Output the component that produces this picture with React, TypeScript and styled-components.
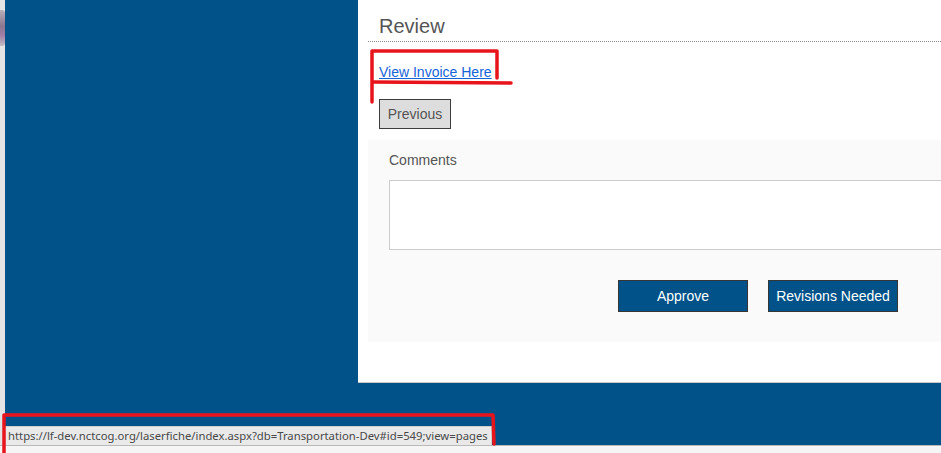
import React from 'react'
import styled, { createGlobalStyle } from 'styled-components'

const GlobalStyle = createGlobalStyle`
  html, body {
    margin: 0;
    padding: 0;
    overflow: hidden;
    background: #f3f3f3;
  }
  body {
    font-family: "Liberation Sans", Arial, sans-serif;
  }
`

const BRAND = '#005288'
const INK = '#e8141c'

const Screen = styled.div`
  position: relative;
  width: 941px;
  height: 453px;
  display: flex;
  flex-direction: column;
  overflow: hidden;
`

const Desktop = styled.div`
  display: flex;
  flex: 1;
  min-height: 0;
`

const Edge = styled.div`
  width: 5px;
  background: #e4e4e4;
  padding-top: 10px;
  box-sizing: border-box;
`

const AvatarSliver = styled.div`
  width: 5px;
  height: 36px;
  border-radius: 0 3px 3px 0;
  background: linear-gradient(180deg, #b7b0b8 0%, #8a7690 45%, #a07ea6 70%, #c4bcc4 100%);
`

const Canvas = styled.div`
  flex: 1;
  display: flex;
  align-items: flex-start;
  padding-left: 353px;
  background: ${BRAND};
`

const Panel = styled.section`
  flex: 1;
  height: 383px;
  box-sizing: border-box;
  background: #ffffff;
  border-bottom: 1px solid #c9c9c9;
  padding-left: 10px;
  overflow: hidden;
`

const Header = styled.div`
  padding: 14px 0 3px 11px;
  border-bottom: 1px dotted #8a8a8a;
  margin-right: -40px;
`

const Title = styled.h2`
  margin: 0;
  font-size: 20px;
  line-height: 24px;
  font-weight: 400;
  color: #555555;
`

const Body = styled.div`
  padding-left: 11px;
`

const InvoiceLink = styled.a`
  display: inline-block;
  margin-top: 21px;
  font-size: 14px;
  line-height: 18px;
  color: #1565d8;
  text-decoration: underline;
`

const PrevButton = styled.button`
  display: block;
  margin-top: 18px;
  width: 72px;
  height: 30px;
  padding: 0;
  background: #dddddd;
  border: 1px solid #3c3c3c;
  font-family: inherit;
  font-size: 14px;
  color: #555555;
`

const CommentsBox = styled.div`
  margin-top: 11px;
  padding: 11px 0 30px 21px;
  background: #fafafa;
  width: 620px;
`

const Label = styled.label`
  display: block;
  font-size: 14px;
  line-height: 18px;
  color: #555555;
`

const CommentField = styled.textarea`
  display: block;
  margin-top: 11px;
  width: 600px;
  height: 70px;
  box-sizing: border-box;
  border: 1px solid #cccccc;
  background: #ffffff;
  resize: none;
  outline: none;
`

const Actions = styled.div`
  display: flex;
  gap: 20px;
  margin-top: 30px;
  padding-left: 229px;
`

const ActionButton = styled.button`
  width: 130px;
  height: 32px;
  padding: 0;
  background: ${BRAND};
  border: 1px solid #363636;
  color: #ffffff;
  font-family: inherit;
  font-size: 14px;
`

const BottomBar = styled.div`
  height: 7px;
  background: #f5f5f5;
  border-top: 1px solid #b9b9b9;
`

const StatusTip = styled.div`
  position: absolute;
  left: 5px;
  top: 426px;
  height: 19px;
  padding: 0 3px 0 3px;
  box-sizing: border-box;
  background: #e9e9e9;
  border: 1px solid #cfcfcf;
  border-left: none;
  border-bottom: none;
  font-family: "Noto Sans", "Open Sans", sans-serif;
  font-size: 11.3px;
  line-height: 18px;
  color: #4a4a4a;
  white-space: nowrap;
`

const Markup = styled.svg`
  position: absolute;
  inset: 0;
  pointer-events: none;
`

const Stroke = styled.path`
  fill: none;
  stroke: ${INK};
  stroke-width: 3.5;
  stroke-linecap: round;
  stroke-linejoin: round;
`

export default function App() {
  return (
    <>
      <GlobalStyle />
      <Screen>
        <Desktop>
          <Edge>
            <AvatarSliver />
          </Edge>
          <Canvas>
            <Panel>
              <Header>
                <Title>Review</Title>
              </Header>
              <Body>
                <InvoiceLink href="#">View Invoice Here</InvoiceLink>
                <PrevButton>Previous</PrevButton>
              </Body>
              <CommentsBox>
                <Label>Comments</Label>
                <CommentField />
                <Actions>
                  <ActionButton>Approve</ActionButton>
                  <ActionButton>Revisions Needed</ActionButton>
                </Actions>
              </CommentsBox>
            </Panel>
          </Canvas>
        </Desktop>
        <BottomBar />
        <StatusTip>https://lf-dev.nctcog.org/laserfiche/index.aspx?db=Transportation-Dev#id=549;view=pages</StatusTip>
        <Markup width="941" height="453" viewBox="0 0 941 453">
          <Stroke d="M372 102 L372 51 L497 51 L497 78" />
          <Stroke d="M373 82 L511 83" />
          <Stroke d="M4 453 L4 415 L493 415 L494 444" />
        </Markup>
      </Screen>
    </>
  )
}
